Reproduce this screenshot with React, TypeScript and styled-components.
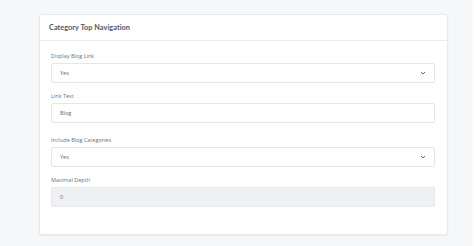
import React from "react";
import styled, { createGlobalStyle } from "styled-components";

const Global = createGlobalStyle`
  html, body { margin: 0; padding: 0; }
  body {
    background: #f7f8fa;
    font-family: "Open Sans", "Liberation Sans", sans-serif;
    width: 474px;
    height: 246px;
    overflow: hidden;
  }
`;

const Page = styled.div`
  display: flex;
  width: 474px;
  height: 246px;
`;

const Main = styled.div`
  width: 472px;
  background: #f6f7f9;
  padding: 14px 0 0 39px;
  box-sizing: border-box;
`;

const Gutter = styled.div`
  flex: 1;
  background: #fcfcfd;
`;

const Card = styled.section`
  width: 409px;
  height: 221px;
  box-sizing: border-box;
  background: #ffffff;
  border: 1px solid #e6e9ed;
  border-radius: 3px;
  box-shadow: 0 1px 2px rgba(30, 40, 60, 0.06);
`;

const Header = styled.header`
  height: 26px;
  box-sizing: border-box;
  display: flex;
  align-items: center;
  padding: 0 9px;
  border-bottom: 1px solid #e9ecef;
`;

const Title = styled.h2`
  margin: 0;
  font-family: "Lato", "Open Sans", sans-serif;
  font-size: 7.3px;
  font-weight: 700;
  color: #4d5866;
  letter-spacing: 0.05px;
`;

const Body = styled.div`
  padding: 11px 12px 0 11px;
  display: flex;
  flex-direction: column;
`;

const Group = styled.div<{ $gap: number }>`
  display: flex;
  flex-direction: column;
  margin-top: ${(p) => p.$gap}px;
`;

const Label = styled.label`
  font-size: 5.5px;
  line-height: 8px;
  color: #68737f;
  margin-bottom: 3px;
`;

const Field = styled.div<{ $disabled?: boolean }>`
  height: 20px;
  box-sizing: border-box;
  display: flex;
  align-items: center;
  justify-content: space-between;
  padding: 0 8px 0 8px;
  border: 1px solid ${(p) => (p.$disabled ? "#e7e9ec" : "#e3e6ea")};
  border-radius: 2px;
  background: ${(p) => (p.$disabled ? "#eff0f2" : "#ffffff")};
  font-size: 5.5px;
  color: #5d6773;
`;

const Chevron = () => (
  <svg width="6" height="4" viewBox="0 0 6 4">
    <path d="M1 1 L3 3 L5 1" fill="none" stroke="#5d6672" strokeWidth="1" />
  </svg>
);

export default function App() {
  return (
    <>
      <Global />
      <Page>
        <Main>
          <Card>
            <Header>
              <Title>Category Top Navigation</Title>
            </Header>
            <Body>
              <Group $gap={0}>
                <Label>Display Blog Link</Label>
                <Field>
                  <span>Yes</span>
                  <Chevron />
                </Field>
              </Group>
              <Group $gap={9}>
                <Label>Link Text</Label>
                <Field>
                  <span>Blog</span>
                </Field>
              </Group>
              <Group $gap={13}>
                <Label>Include Blog Categories</Label>
                <Field>
                  <span>Yes</span>
                  <Chevron />
                </Field>
              </Group>
              <Group $gap={9}>
                <Label>Maximal Depth</Label>
                <Field $disabled>
                  <span>0</span>
                </Field>
              </Group>
            </Body>
          </Card>
        </Main>
        <Gutter />
      </Page>
    </>
  );
}
